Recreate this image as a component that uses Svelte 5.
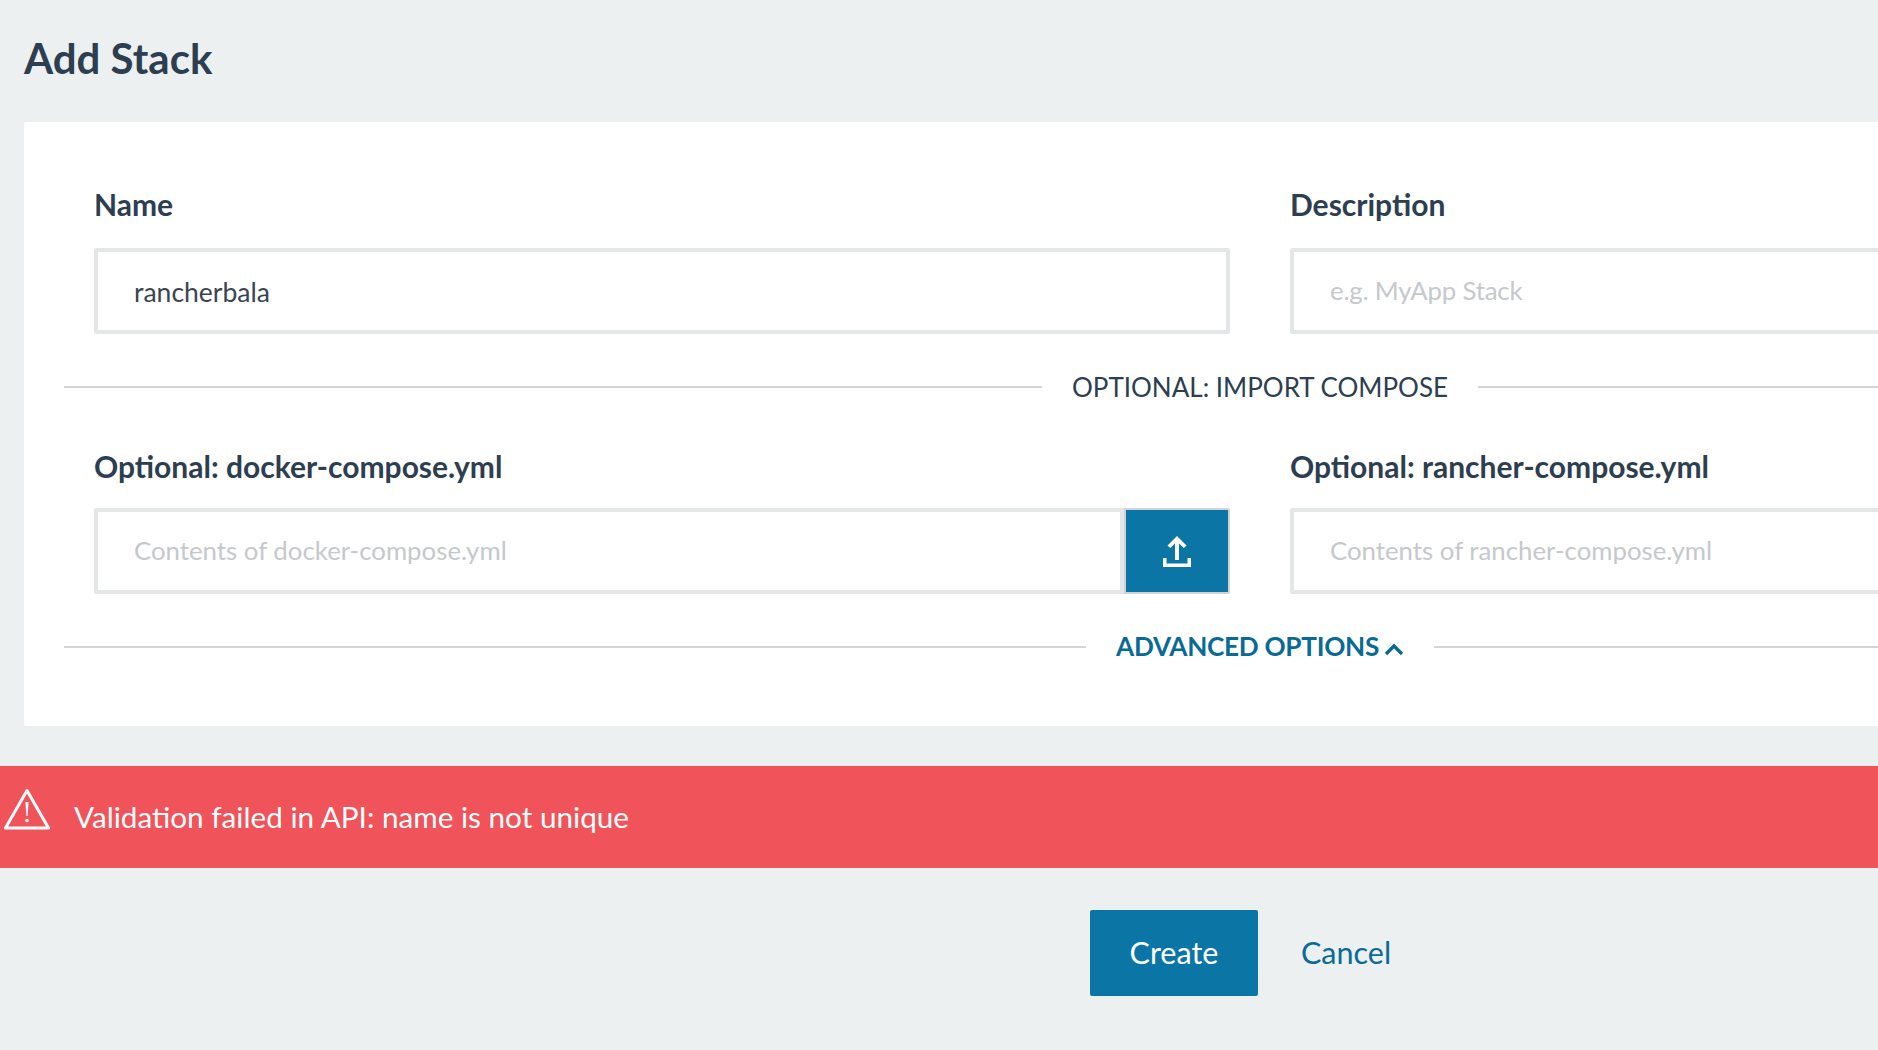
<script>
  let name = "rancherbala";
</script>

<div class="page">
  <h1>Add Stack</h1>

  <section class="card">
    <div class="row upper">
      <div class="field">
        <label for="name">Name</label>
        <input id="name" class="filled" type="text" bind:value={name} />
      </div>
      <div class="field">
        <label for="desc">Description</label>
        <input id="desc" class="tight" type="text" placeholder="e.g. MyApp Stack" />
      </div>
    </div>

    <div class="divider first"><span>OPTIONAL: IMPORT COMPOSE</span></div>

    <div class="row lower">
      <div class="field">
        <label for="docker">Optional: docker-compose.yml</label>
        <div class="input-group">
          <input id="docker" type="text" placeholder="Contents of docker-compose.yml" />
          <button class="upload" aria-label="Upload">
            <svg width="30" height="33" viewBox="0 0 30 33">
              <path d="M15 1 L24.5 10.5 L21.8 13 L17 8.4 V25 H13 V8.4 L8.2 13 L5.5 10.5 Z" fill="#fff" />
              <path d="M1 23 H4.5 V28.5 H25.5 V23 H29 V32 H1 Z" fill="#fff" />
            </svg>
          </button>
        </div>
      </div>
      <div class="field">
        <label for="rancher">Optional: rancher-compose.yml</label>
        <input id="rancher" type="text" placeholder="Contents of rancher-compose.yml" />
      </div>
    </div>

    <div class="divider second">
      <span class="link">ADVANCED OPTIONS
        <svg width="20" height="14" viewBox="0 0 20 14">
          <path d="M2 12 L10 4 L18 12" fill="none" stroke="#0a6a96" stroke-width="3.4" />
        </svg>
      </span>
    </div>
  </section>

  <div class="alert">
    <svg width="46" height="42" viewBox="0 0 46 42">
      <path d="M23 2.5 L44.5 40 H1.5 Z" fill="none" stroke="#fff" stroke-width="3" stroke-linejoin="round" />
      <path d="M21.4 14 H24.6 L23.6 28 H22.4 Z" fill="#fff" />
      <circle cx="23" cy="32.5" r="1.8" fill="#fff" />
    </svg>
    <span>Validation failed in API: name is not unique</span>
  </div>

  <div class="actions">
    <button class="create">Create</button>
    <button class="cancel">Cancel</button>
  </div>
</div>

<style>
  :global(body) {
    margin: 0;
    background: #ecf0f1;
    overflow: hidden;
  }

  .page {
    width: 2520px;
    height: 1050px;
    font-family: Lato, "Liberation Sans", sans-serif;
    color: #2c3e50;
    background: #ecf0f1;
  }

  h1 {
    margin: 0;
    padding: 35px 0 41px 24px;
    font-size: 42px;
    line-height: 46px;
    font-weight: 700;
  }

  .card {
    margin-left: 24px;
    width: 2472px;
    height: 604px;
    box-sizing: border-box;
    background: #fff;
    border-radius: 2px;
    padding: 65px 40px 0;
  }

  .row {
    display: flex;
    gap: 60px;
    padding: 0 30px;
  }

  .field {
    flex: 0 0 1136px;
  }

  label {
    display: block;
    font-size: 30px;
    line-height: 34px;
    font-weight: 700;
  }

  .upper label {
    margin-bottom: 27px;
  }

  .lower label {
    margin-bottom: 25px;
  }

  input {
    display: block;
    width: 100%;
    height: 86px;
    box-sizing: border-box;
    border: 4px solid #e4e7e8;
    border-radius: 2px;
    padding: 0 36px 2px;
    font-family: inherit;
    font-size: 26.5px;
    color: #3a4552;
    background: #fff;
    outline: none;
  }

  input.filled {
    padding: 2px 36px 0;
  }

  input::placeholder {
    color: #c5c8cc;
    opacity: 1;
    font-size: 25.8px;
  }

  input.tight::placeholder {
    letter-spacing: -0.2px;
  }

  .input-group {
    display: flex;
  }

  .input-group input {
    flex: 1;
    min-width: 0;
    border-radius: 2px 0 0 2px;
  }

  .upload {
    flex: 0 0 106px;
    height: 86px;
    box-sizing: border-box;
    padding: 0;
    border: 2px solid #cfd3d6;
    background: #0b75a6;
    border-radius: 0 2px 2px 0;
    display: flex;
    align-items: center;
    justify-content: center;
  }

  .divider {
    display: flex;
    align-items: center;
    gap: 30px;
    font-size: 26px;
    line-height: 34px;
  }

  .divider::before,
  .divider::after {
    content: "";
    flex: 1;
    height: 2px;
    background: #d3d6d9;
  }

  .divider.first {
    margin: 36px 0 45px;
  }

  .divider.second {
    margin-top: 35px;
  }

  .link {
    color: #0a6a96;
    font-weight: 700;
    font-size: 26.2px;
    letter-spacing: -0.3px;
    display: flex;
    align-items: center;
    gap: 5px;
    margin-bottom: 2px;
  }

  .link svg {
    margin-top: 6px;
  }

  .alert {
    margin-top: 40px;
    height: 102px;
    background: #f05359;
    color: #fff;
    display: flex;
    align-items: center;
    font-size: 29.7px;
    padding-left: 4px;
  }

  .alert svg {
    margin-bottom: 16px;
  }

  .alert span {
    margin-left: 24px;
    margin-bottom: 2px;
  }

  .actions {
    display: flex;
    align-items: center;
    margin: 42px 0 0 1090px;
    gap: 43px;
  }

  .actions button {
    font-family: inherit;
    font-size: 30.5px;
    border: 0;
    padding: 0 0 2px;
  }

  .create {
    width: 168px;
    height: 86px;
    background: #0b75a6;
    color: #fff;
    border-radius: 2px;
  }

  .cancel {
    background: none;
    color: #0a6a96;
  }
</style>
